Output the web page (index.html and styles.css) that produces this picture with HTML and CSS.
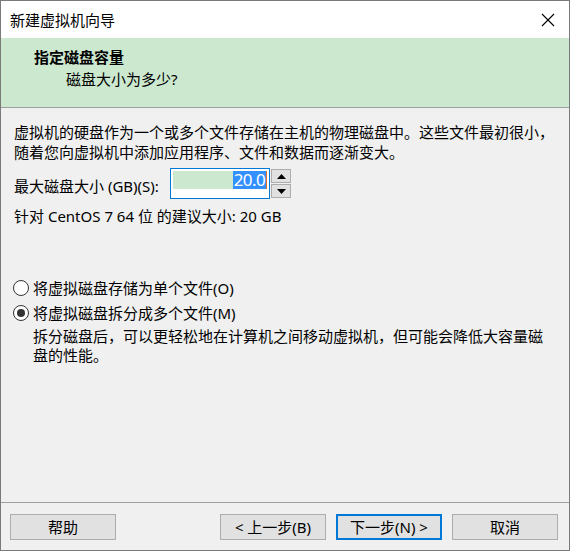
FILE: index.html
```html
<!DOCTYPE html>
<html lang="zh-CN">
<head>
<meta charset="utf-8">
<title>新建虚拟机向导</title>
<link rel="stylesheet" href="styles.css">
</head>
<body>
<div class="window">
  <div class="titlebar">
    <span class="title">新建虚拟机向导</span>
    <svg class="close" width="14" height="14" viewBox="0 0 14 14"><path d="M1 1 L13 13 M13 1 L1 13" stroke="#000" stroke-width="1.1" fill="none"/></svg>
  </div>
  <div class="header">
    <div class="h-title">指定磁盘容量</div>
    <div class="h-sub">磁盘大小为多少?</div>
  </div>
  <div class="content">
    <p class="intro">虚拟机的硬盘作为一个或多个文件存储在主机的物理磁盘中。这些文件最初很小，<br>随着您向虚拟机中添加应用程序、文件和数据而逐渐变大。</p>
    <div class="size-row">
      <span class="size-label">最大磁盘大小 (GB)(S):</span>
      <div class="spin">
        <div class="spin-input">
          <div class="spin-field"><span class="sel">20.0</span><span class="caret"></span></div>
        </div>
        <div class="spin-btns">
          <div class="spin-btn"><svg width="9" height="5" viewBox="0 0 9 5"><path d="M0 5 L4.5 0 L9 5 Z" fill="#000"/></svg></div>
          <div class="spin-btn"><svg width="9" height="5" viewBox="0 0 9 5"><path d="M0 0 L9 0 L4.5 5 Z" fill="#000"/></svg></div>
        </div>
      </div>
    </div>
    <div class="recommend">针对 CentOS 7 64 位 的建议大小: 20 GB</div>
    <div class="radios">
      <div class="radio-row"><span class="radio"></span><span>将虚拟磁盘存储为单个文件(O)</span></div>
      <div class="radio-row second"><span class="radio checked"></span><span>将虚拟磁盘拆分成多个文件(M)</span></div>
      <p class="desc">拆分磁盘后，可以更轻松地在计算机之间移动虚拟机，但可能会降低大容量磁<br>盘的性能。</p>
    </div>
  </div>
  <div class="footer">
    <button class="btn">帮助</button>
    <div class="nav">
      <button class="btn">&lt; 上一步(B)</button>
      <button class="btn default">下一步(N) &gt;</button>
      <button class="btn">取消</button>
    </div>
  </div>
</div>
</body>
</html>
```

FILE: styles.css
```css
html, body {
  margin: 0;
  padding: 0;
  background: #f0f0f0;
}
.window {
  box-sizing: border-box;
  width: 570px;
  height: 551px;
  border: 1px solid #7a7a7a;
  display: flex;
  flex-direction: column;
  font-family: "Noto Sans", "Noto Sans CJK SC", sans-serif;
  font-size: 15px;
  color: #000;
  background: #f0f0f0;
}
.titlebar {
  height: 37px;
  background: #fff;
  display: flex;
  align-items: center;
  justify-content: space-between;
  padding: 0 14px 0 9px;
}
.title {
  line-height: 20px;
}
.close {
  display: block;
}
.header {
  height: 70px;
  box-sizing: border-box;
  background: #cce8cf;
  border-bottom: 1px solid #a0a0a0;
  padding-top: 8px;
  line-height: 22px;
}
.h-title {
  padding-left: 33px;
  font-weight: bold;
}
.h-sub {
  padding-left: 65px;
}
.content {
  flex: 1;
  padding: 14px 0 0 13px;
  white-space: nowrap;
}
.intro {
  margin: 0;
  line-height: 20px;
}
.size-row {
  display: flex;
  align-items: center;
  margin-top: 6px;
}
.size-label {
  width: 156px;
  padding-top: 3px;
}
.spin {
  display: flex;
  align-items: flex-start;
  gap: 1px;
}
.spin-input {
  box-sizing: border-box;
  width: 100px;
  height: 31px;
  border: 1px solid #0078d7;
  background: #fff;
  padding: 2px;
}
.spin-field {
  height: 18px;
  background: #cce8cf;
  display: flex;
  justify-content: flex-end;
  align-items: stretch;
}
.sel {
  background: #3390ff;
  color: #fff;
  font-size: 17px;
  line-height: 18px;
  letter-spacing: -0.6px;
  padding: 0 1px 0 1px;
}
.caret {
  width: 1px;
  background: #e07020;
}
.spin-btns {
  display: flex;
  flex-direction: column;
  gap: 1px;
  padding-top: 1px;
}
.spin-btn {
  box-sizing: border-box;
  width: 20px;
  height: 14px;
  background: #e1e1e1;
  border: 1px solid #adadad;
  display: flex;
  align-items: center;
  justify-content: center;
}
.spin-btn svg {
  display: block;
}
.recommend {
  margin-top: 7px;
  line-height: 20px;
}
.radios {
  margin-top: 52px;
  margin-left: -1px;
}
.radio-row {
  display: flex;
  align-items: center;
  gap: 4px;
  line-height: 20px;
}
.radio-row.second {
  margin-top: 5px;
}
.radio {
  box-sizing: border-box;
  width: 16px;
  height: 16px;
  border: 1px solid #333;
  border-radius: 50%;
  background: #fff;
  display: flex;
  align-items: center;
  justify-content: center;
}
.radio.checked::after {
  content: "";
  width: 8px;
  height: 8px;
  border-radius: 50%;
  background: #333;
}
.desc {
  margin: 4px 0 0 20px;
  line-height: 19px;
}
.footer {
  border-top: 1px solid #a0a0a0;
  display: flex;
  justify-content: space-between;
  padding: 11px 11px 10px 9px;
}
.nav {
  display: flex;
  gap: 10px;
}
.btn {
  box-sizing: border-box;
  width: 106px;
  height: 26px;
  margin: 0;
  padding: 0;
  background: #e1e1e1;
  border: 1px solid #adadad;
  font-family: "Noto Sans", "Noto Sans CJK SC", sans-serif;
  font-size: 15px;
  color: #000;
  line-height: 20px;
}
.btn.default {
  border: 2px solid #0078d7;
}
```
